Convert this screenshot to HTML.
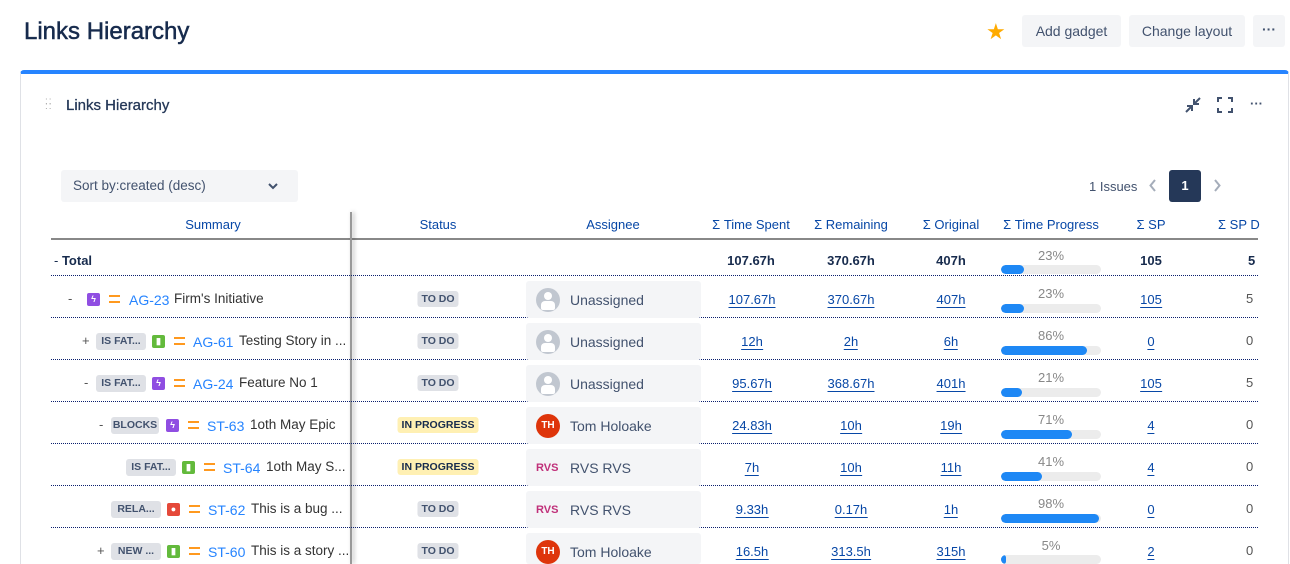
<!DOCTYPE html>
<html><head><meta charset="utf-8"><style>
*{box-sizing:border-box;margin:0;padding:0}
html,body{width:1290px;height:564px;overflow:hidden}
body{background:#fff;font-family:"Liberation Sans",sans-serif;color:#172b4d;position:relative;font-size:13px}
.a{position:absolute;white-space:nowrap}
.btn{position:absolute;top:15px;height:32px;background:#f4f5f7;border-radius:3px;color:#42526e;font-size:14px;line-height:32px;text-align:center}
.card{position:absolute;left:20px;top:70px;width:1269px;height:494px;border:1px solid #dfe1e6;border-bottom:none;border-top:4px solid #2684ff;border-radius:4px 4px 0 0}
.dot{position:absolute;left:51px;width:1207px;height:0;border-top:1px dotted #0a1f6e}
.hd{position:absolute;top:217px;color:#0747a6;font-size:13px;text-align:center}
.lz{position:absolute;font-size:13px;color:#0747a6;border-bottom:1px solid #0747a6;line-height:15px;transform:translateX(-50%)}
.badge{position:absolute;height:17px;width:50px;background:#dfe1e6;border-radius:3px;color:#42526e;font-size:10.5px;font-weight:bold;line-height:17px;text-align:center}
.ic{position:absolute;width:13px;height:13px;border-radius:2px;color:#fff;font-size:9px;line-height:13px;text-align:center;font-weight:bold}
.pr{position:absolute;width:11px;height:8px;border-top:2px solid #ff991f;border-bottom:2px solid #ff991f}
.key{position:absolute;color:#2684ff;font-size:14px}
.sm{position:absolute;color:#333;font-size:13.5px}
.st{position:absolute;height:16px;border-radius:3px;font-size:10.5px;font-weight:bold;line-height:16px;padding:0 4px;transform:translateX(-50%)}
.as{position:absolute;left:526px;width:175px;height:37px;background:#f4f5f7;border-radius:3px}
.av{position:absolute;left:10px;top:7px;width:24px;height:24px;border-radius:50%;overflow:hidden}
.an{position:absolute;left:44px;top:11px;font-size:14px;color:#42526e}
.pt{position:absolute;left:1001px;width:100px;text-align:center;color:#888;font-size:13px}
.pb{position:absolute;left:1001px;width:100px;height:9px;background:#ececec;border-radius:5px;overflow:hidden}
.pb i{display:block;height:9px;background:#1e88f5;border-radius:5px}
.sd{position:absolute;left:1246px;color:#555;font-size:13px}
.un{background:#c1c7d0}
.un:before{content:"";position:absolute;left:8px;top:4px;width:8px;height:8px;border-radius:50%;background:#fff}
.un:after{content:"";position:absolute;left:5px;top:13px;width:14px;height:9px;border-radius:4px 4px 2px 2px;background:#fff}
</style></head><body>
<div class="a" style="left:24px;top:18px;font-size:24px;color:#172b4d;-webkit-text-stroke:0.5px #172b4d">Links Hierarchy</div>
<div class="a" style="left:986px;top:19px;color:#ffab00;font-size:22px">★</div>
<div class="btn" style="left:1022px;width:99px">Add gadget</div>
<div class="btn" style="left:1129px;width:116px">Change layout</div>
<div class="btn" style="left:1253px;width:32px;font-weight:bold;line-height:28px">···</div>
<div class="card"></div>
<div class="a" style="left:45px;top:99px;color:#aaa;font-size:10px;line-height:5px;letter-spacing:1px">::<br>::</div>
<div class="a" style="left:66px;top:97px;font-size:15px;color:#253858;-webkit-text-stroke:0.3px #253858">Links Hierarchy</div>
<svg class="a" style="left:1184px;top:96px" width="18" height="18" viewBox="0 0 18 18" fill="none" stroke="#42526e" stroke-width="2"><path d="M2 16L7 11M3 10H8V15M16 2L11 7M10 3V8H15"/></svg>
<svg class="a" style="left:1216px;top:96px" width="18" height="18" viewBox="0 0 18 18" fill="none" stroke="#42526e" stroke-width="2"><path d="M2 6V2H6M12 2H16V6M16 12V16H12M6 16H2V12"/></svg>
<div class="a" style="left:1250px;top:96px;font-weight:bold;color:#42526e">···</div>
<div class="a" style="left:61px;top:170px;width:237px;height:32px;background:#f4f5f7;border-radius:3px;color:#42526e;font-size:13.5px;line-height:32px;padding-left:12px">Sort by:created (desc)<svg style="position:absolute;left:207px;top:13px" width="10" height="7" viewBox="0 0 10 7"><path d="M1 1L5 5L9 1" fill="none" stroke="#42526e" stroke-width="2"/></svg></div>
<div class="a" style="left:1089px;top:179px;color:#42526e">1 Issues</div>
<svg class="a" style="left:1149px;top:179px" width="8" height="13" viewBox="0 0 8 13"><path d="M6 1L1.5 6.5L6 12" fill="none" stroke="#a5adba" stroke-width="2"/></svg>
<div class="a" style="left:1169px;top:170px;width:32px;height:32px;background:#253858;border-radius:3px;color:#fff;font-weight:bold;text-align:center;line-height:32px">1</div>
<svg class="a" style="left:1213px;top:179px" width="8" height="13" viewBox="0 0 8 13"><path d="M2 1L6.5 6.5L2 12" fill="none" stroke="#a5adba" stroke-width="2"/></svg>
<div class="hd" style="left:51px;width:324px">Summary</div>
<div class="hd" style="left:388px;width:100px">Status</div>
<div class="hd" style="left:563px;width:100px">Assignee</div>
<div class="hd" style="left:701px;width:100px">Σ Time Spent</div>
<div class="hd" style="left:801px;width:100px">Σ Remaining</div>
<div class="hd" style="left:901px;width:100px">Σ Original</div>
<div class="hd" style="left:1001px;width:100px">Σ Time Progress</div>
<div class="hd" style="left:1101px;width:100px">Σ SP</div>
<div class="hd" style="left:1218px">Σ SP D</div>
<div class="a" style="left:51px;top:238px;width:1207px;height:2px;background:#888"></div>
<div class="a" style="left:350px;top:212px;width:2px;height:352px;background:#999;box-shadow:2px 0 4px rgba(0,0,0,.3)"></div>
<div class="dot" style="top:275px"></div><div class="dot" style="top:317px"></div><div class="dot" style="top:359px"></div><div class="dot" style="top:401px"></div><div class="dot" style="top:443px"></div><div class="dot" style="top:485px"></div><div class="dot" style="top:527px"></div>
<div class="a" style="left:54px;top:253px;font-weight:bold"><span style="font-weight:normal">- </span>Total</div>
<div class="a" style="left:751px;top:253px;font-weight:bold;transform:translateX(-50%)">107.67h</div>
<div class="a" style="left:851px;top:253px;font-weight:bold;transform:translateX(-50%)">370.67h</div>
<div class="a" style="left:951px;top:253px;font-weight:bold;transform:translateX(-50%)">407h</div>
<div class="pt" style="top:248px">23%</div><div class="pb" style="top:265px"><i style="width:23%"></i></div>
<div class="a" style="left:1151px;top:253px;font-weight:bold;transform:translateX(-50%)">105</div>
<div class="a" style="left:1248px;top:253px;font-weight:bold">5</div>

<div class="a" style="left:68px;top:291px;color:#555">-</div>
<div class="ic" style="left:87px;top:293px;background:#904ee2">ϟ</div>
<div class="pr" style="left:109px;top:295px"></div>
<div class="key" style="left:129px;top:292px">AG-23</div><div class="sm" style="left:174px;top:291px">Firm's Initiative</div>

<div class="a" style="left:82px;top:333px;color:#555">+</div>
<div class="badge" style="left:96px;top:333px">IS FAT...</div>
<div class="ic" style="left:152px;top:335px;background:#63ba3c">▮</div>
<div class="pr" style="left:174px;top:337px"></div>
<div class="key" style="left:193px;top:334px">AG-61</div><div class="sm" style="left:239px;top:333px">Testing Story in ...</div>

<div class="a" style="left:84px;top:375px;color:#555">-</div>
<div class="badge" style="left:96px;top:375px">IS FAT...</div>
<div class="ic" style="left:152px;top:377px;background:#904ee2">ϟ</div>
<div class="pr" style="left:174px;top:379px"></div>
<div class="key" style="left:193px;top:376px">AG-24</div><div class="sm" style="left:239px;top:375px">Feature No 1</div>

<div class="a" style="left:99px;top:417px;color:#555">-</div>
<div class="badge" style="left:111px;top:417px;width:48px">BLOCKS</div>
<div class="ic" style="left:166px;top:419px;background:#904ee2">ϟ</div>
<div class="pr" style="left:188px;top:421px"></div>
<div class="key" style="left:207px;top:418px">ST-63</div><div class="sm" style="left:250px;top:417px">1oth May Epic</div>

<div class="badge" style="left:126px;top:459px">IS FAT...</div>
<div class="ic" style="left:182px;top:461px;background:#63ba3c">▮</div>
<div class="pr" style="left:204px;top:463px"></div>
<div class="key" style="left:223px;top:460px">ST-64</div><div class="sm" style="left:266px;top:459px">1oth May S...</div>

<div class="badge" style="left:111px;top:501px">RELA...</div>
<div class="ic" style="left:167px;top:503px;background:#e5493a">●</div>
<div class="pr" style="left:189px;top:505px"></div>
<div class="key" style="left:208px;top:502px">ST-62</div><div class="sm" style="left:251px;top:501px">This is a bug ...</div>

<div class="a" style="left:97px;top:543px;color:#555">+</div>
<div class="badge" style="left:111px;top:543px">NEW ...</div>
<div class="ic" style="left:167px;top:545px;background:#63ba3c">▮</div>
<div class="pr" style="left:189px;top:547px"></div>
<div class="key" style="left:208px;top:544px">ST-60</div><div class="sm" style="left:251px;top:543px">This is a story ...</div>

<div class="st" style="left:438px;top:291px;background:#dfe1e6;color:#42526e">TO DO</div>
<div class="st" style="left:438px;top:333px;background:#dfe1e6;color:#42526e">TO DO</div>
<div class="st" style="left:438px;top:375px;background:#dfe1e6;color:#42526e">TO DO</div>
<div class="st" style="left:438px;top:417px;background:#fff0b3;color:#172b4d">IN PROGRESS</div>
<div class="st" style="left:438px;top:459px;background:#fff0b3;color:#172b4d">IN PROGRESS</div>
<div class="st" style="left:438px;top:501px;background:#dfe1e6;color:#42526e">TO DO</div>
<div class="st" style="left:438px;top:543px;background:#dfe1e6;color:#42526e">TO DO</div>

<div class="as" style="top:281px"><div class="av un"></div><div class="an">Unassigned</div></div>
<div class="as" style="top:323px"><div class="av un"></div><div class="an">Unassigned</div></div>
<div class="as" style="top:365px"><div class="av un"></div><div class="an">Unassigned</div></div>
<div class="as" style="top:407px"><div class="av" style="background:#de350b;color:#fff;font-size:10px;font-weight:bold;text-align:center;line-height:24px">TH</div><div class="an">Tom Holoake</div></div>
<div class="as" style="top:449px"><div class="av" style="color:#c0307a;font-size:11px;font-weight:bold;line-height:24px;border-radius:0">RVS</div><div class="an">RVS RVS</div></div>
<div class="as" style="top:491px"><div class="av" style="color:#c0307a;font-size:11px;font-weight:bold;line-height:24px;border-radius:0">RVS</div><div class="an">RVS RVS</div></div>
<div class="as" style="top:533px;height:31px"><div class="av" style="background:#de350b;color:#fff;font-size:10px;font-weight:bold;text-align:center;line-height:24px">TH</div><div class="an">Tom Holoake</div></div>

<div class="lz" style="left:752px;top:292px">107.67h</div><div class="lz" style="left:851px;top:292px">370.67h</div><div class="lz" style="left:951px;top:292px">407h</div><div class="lz" style="left:1151px;top:292px">105</div><div class="sd" style="top:291px">5</div>
<div class="pt" style="top:286px">23%</div><div class="pb" style="top:304px"><i style="width:23%"></i></div>
<div class="lz" style="left:752px;top:334px">12h</div><div class="lz" style="left:851px;top:334px">2h</div><div class="lz" style="left:951px;top:334px">6h</div><div class="lz" style="left:1151px;top:334px">0</div><div class="sd" style="top:333px">0</div>
<div class="pt" style="top:328px">86%</div><div class="pb" style="top:346px"><i style="width:86%"></i></div>
<div class="lz" style="left:752px;top:376px">95.67h</div><div class="lz" style="left:851px;top:376px">368.67h</div><div class="lz" style="left:951px;top:376px">401h</div><div class="lz" style="left:1151px;top:376px">105</div><div class="sd" style="top:375px">5</div>
<div class="pt" style="top:370px">21%</div><div class="pb" style="top:388px"><i style="width:21%"></i></div>
<div class="lz" style="left:752px;top:418px">24.83h</div><div class="lz" style="left:851px;top:418px">10h</div><div class="lz" style="left:951px;top:418px">19h</div><div class="lz" style="left:1151px;top:418px">4</div><div class="sd" style="top:417px">0</div>
<div class="pt" style="top:412px">71%</div><div class="pb" style="top:430px"><i style="width:71%"></i></div>
<div class="lz" style="left:752px;top:460px">7h</div><div class="lz" style="left:851px;top:460px">10h</div><div class="lz" style="left:951px;top:460px">11h</div><div class="lz" style="left:1151px;top:460px">4</div><div class="sd" style="top:459px">0</div>
<div class="pt" style="top:454px">41%</div><div class="pb" style="top:472px"><i style="width:41%"></i></div>
<div class="lz" style="left:752px;top:502px">9.33h</div><div class="lz" style="left:851px;top:502px">0.17h</div><div class="lz" style="left:951px;top:502px">1h</div><div class="lz" style="left:1151px;top:502px">0</div><div class="sd" style="top:501px">0</div>
<div class="pt" style="top:496px">98%</div><div class="pb" style="top:514px"><i style="width:98%"></i></div>
<div class="lz" style="left:752px;top:544px">16.5h</div><div class="lz" style="left:851px;top:544px">313.5h</div><div class="lz" style="left:951px;top:544px">315h</div><div class="lz" style="left:1151px;top:544px">2</div><div class="sd" style="top:543px">0</div>
<div class="pt" style="top:538px">5%</div><div class="pb" style="top:555px"><i style="width:5%"></i></div>
</body></html>
